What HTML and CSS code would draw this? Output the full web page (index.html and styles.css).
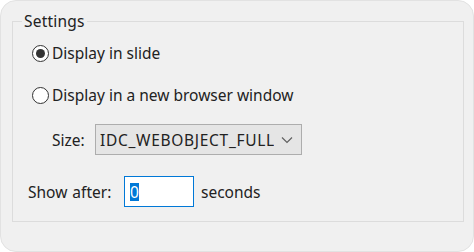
FILE: index.html
```html
<!doctype html>
<html lang="en">
<head>
<title>Web Object Settings</title>
<link rel="stylesheet" href="styles.css">
</head>
<body>

<div class="panel">
  <fieldset class="group">
    <legend>Settings</legend>

    <label class="option">
      <span class="radio checked"></span>
      Display in slide
    </label>

    <label class="option">
      <span class="radio"></span>
      Display in a new browser window
    </label>

    <div class="size-row">
      <span class="field-label size-label">Size:</span>
      <div class="select">
        <span class="select-text">IDC_WEBOBJECT_FULL</span>
        <svg class="chevron" width="12" height="8" viewBox="0 0 12 8">
          <path d="M1 1.5 L6 6.5 L11 1.5" fill="none" stroke="#606060" stroke-width="1.2"/>
        </svg>
      </div>
    </div>

    <div class="show-row">
      <span class="field-label show-label">Show after:</span>
      <div class="textbox"><span class="selected">0</span></div>
      <span class="field-label">seconds</span>
    </div>
  </fieldset>
</div>

</body>
</html>
```

FILE: styles.css
```css
* {
  box-sizing: border-box;
}

body {
  margin: 0;
  background: #ffffff;
  font-family: "Noto Sans", "Open Sans", sans-serif;
  font-size: 15.5px;
  color: #222222;
}

.panel {
  width: 474px;
  height: 252px;
  background: #f0f0f0;
  border: 1px solid #e2e2e2;
  border-radius: 16px;
  padding: 10px 9px 0 11px;
}

.group {
  margin: 0;
  border: 1px solid #dcdcdc;
  padding: 1px 0 14px 15px;
  min-width: 0;
}

.group legend {
  padding: 0 2px;
  margin-left: -6px;
  line-height: 20px;
  letter-spacing: 0.2px;
}

.option {
  display: flex;
  align-items: center;
  height: 42px;
  margin-left: 4px;
  gap: 3px;
}

.radio {
  width: 17px;
  height: 17px;
  border: 1px solid #333333;
  border-radius: 50%;
  background: #ffffff;
  display: flex;
  align-items: center;
  justify-content: center;
}

.radio.checked::before {
  content: "";
  width: 9px;
  height: 9px;
  border-radius: 50%;
  background: #333333;
}

.size-row {
  display: flex;
  align-items: center;
  margin: 8px 0 0 24px;
  height: 31px;
  gap: 6px;
}

.size-label {
  width: 37px;
}

.select {
  width: 207px;
  height: 31px;
  background: #e5e5e5;
  border: 1px solid #adadad;
  display: flex;
  align-items: center;
  padding: 0 8px 0 4px;
}

.select-text {
  width: 174px;
  overflow: hidden;
  white-space: nowrap;
  letter-spacing: 0.7px;
}

.chevron {
  flex: none;
  margin-left: auto;
}

.show-row {
  display: flex;
  align-items: center;
  margin-top: 21px;
  height: 31px;
  gap: 5px;
}

.show-label {
  width: 91px;
  word-spacing: 1px;
}

.textbox {
  width: 70px;
  height: 31px;
  background: #ffffff;
  border: 1px solid #0078d7;
  display: flex;
  align-items: center;
  padding-left: 5px;
  margin-right: 2px;
}

.selected {
  background: #0078d7;
  color: #ffffff;
  line-height: 18px;
}
```
